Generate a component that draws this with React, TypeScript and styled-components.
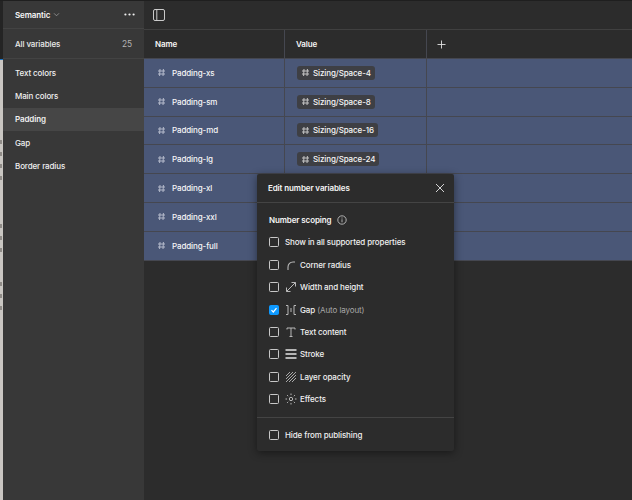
import React from "react";
import styled, { createGlobalStyle } from "styled-components";

const Global = createGlobalStyle`
  html, body { margin: 0; padding: 0; background: #2c2c2c; }
  body { font-family: Inter, "Liberation Sans", sans-serif; -webkit-font-smoothing: antialiased; }
  * { box-sizing: border-box; }
`;

const Page = styled.div`
  position: relative; width: 632px; height: 500px; display: flex; overflow: hidden;
  background: #2c2c2c; color: #f6f6f6; font-size: 8px; letter-spacing: -0.11px; font-weight: 500; border-top: 1px solid #1f1f1f;
`;
const Strip = styled.div`
  width: 3px; flex: none; overflow: hidden; background: #c9c6c2; display: flex; flex-direction: column;
`;
const StripTop = styled.div`height: 59px; flex: none; background: #242424; border-bottom: 1px solid #1e78c8;`;
const StripGroup = styled.div<{ $gap: number }>`
  margin-top: ${p => p.$gap}px; display: flex; flex-direction: column; gap: 8px;
`;
const Tick = styled.span`display: block; width: 2px; height: 4px; background: #8f8b87;`;
const Sidebar = styled.aside`
  width: 141px; flex: none; background: #383838; display: flex; flex-direction: column;
`;
const SideHead = styled.div`
  height: 28px; flex: none; display: flex; align-items: center; padding: 0 9px 0 12px; border-bottom: 1px solid #434343; font-weight: 600;
`;
const SideTitle = styled.span`margin-right: 3px;`;
const MoreBtn = styled.span`margin-left: auto; display: flex;`;
const AllRow = styled.div`
  height: 30px; flex: none; display: flex; align-items: center; justify-content: space-between; padding: 0 12px;
  border-bottom: 1px solid #434343; color: #ececec;
`;
const Count = styled.span`color: #b4b4b4; font-weight: 400; font-size: 8.4px;`;
const Groups = styled.div`padding-top: 2px; display: flex; flex-direction: column;`;
const Group = styled.div<{ $on?: boolean }>`
  height: 23.3px; display: flex; align-items: center; padding-left: 12px; color: #f0f0f0;
  background: ${p => (p.$on ? "#464646" : "transparent")}; font-weight: ${p => (p.$on ? 600 : 500)};
`;
const Main = styled.main`flex: 1; display: flex; flex-direction: column; min-width: 0;`;
const Toolbar = styled.div`height: 29px; flex: none; display: flex; align-items: center; padding-left: 9px; border-bottom: 1px solid #404040;`;
const Row = styled.div<{ $head?: boolean }>`
  height: ${p => (p.$head ? 29 : 28.8)}px; flex: none; display: grid; grid-template-columns: 141px 142px 1fr;
  background: ${p => (p.$head ? "#2c2c2c" : "#4a5777")}; border-bottom: 1px solid #454750;
`;
const Cell = styled.div`
  display: flex; align-items: center; padding-left: 11px; border-right: 1px solid #454750; min-width: 0;
`;
const HeadCell = styled(Cell)`font-weight: 600; color: #f6f6f6;`;
const LastCell = styled.div`display: flex; align-items: center; padding-left: 10px;`;
const NameCell = styled(Cell)`gap: 6px; padding-left: 13px;`;
const ValueCell = styled(Cell)`padding-left: 12px;`;
const Chip = styled.span`
  display: inline-flex; align-items: center; gap: 3px; height: 14px; padding: 0 4px; border-radius: 3px;
  background: #3e3f44; color: #f6f6f6;
`;
const Modal = styled.section`
  position: absolute; left: 257px; top: 173px; width: 197px; height: 277px; background: #2c2c2c;
  border-radius: 2px; box-shadow: 0 2px 8px rgba(0,0,0,.45); display: flex; flex-direction: column;
`;
const ModalHead = styled.div`
  height: 29px; flex: none; display: flex; align-items: center; justify-content: space-between;
  padding: 0 9px 0 11px; border-bottom: 1px solid #444; font-weight: 600;
`;
const Close = styled.span`display: flex;`;
const ModalBody = styled.div`padding: 8.3px 12px 0; display: flex; flex-direction: column; flex: 1;`;
const Scoping = styled.div`height: 17px; display: flex; align-items: center; gap: 6px; font-weight: 600; margin-bottom: 3px;`;
const Option = styled.label`height: 22.4px; flex: none; display: flex; align-items: center; gap: 6px; color: #f0f0f0;`;
const Box = styled.span<{ $on?: boolean }>`
  width: 10px; height: 10px; flex: none; border-radius: 1.5px; display: flex; align-items: center; justify-content: center;
  border: 1.2px solid ${p => (p.$on ? "#0d99ff" : "#c8c8c8")}; background: ${p => (p.$on ? "#0d99ff" : "transparent")};
`;
const IconSlot = styled.span`width: 12px; height: 12px; flex: none; display: flex; margin-right: -3px; color: #b8b8b8;`;
const Muted = styled.span`color: #a8a8a8; font-weight: 400;`;
const Footer = styled.div`
  flex: none; height: 34px; padding: 0 12px; border-top: 1px solid #444;
  display: flex; align-items: center; gap: 6px; color: #f0f0f0;
`;

const HashIcon = ({ c = "#b4bacb" }: { c?: string }) => (
  <svg width="9" height="9" viewBox="0 0 9 9" fill="none" stroke={c} strokeWidth="1">
    <path d="M3 1 2.6 8M6.4 1 6 8M1 3h7M1 6h7" />
  </svg>
);

const icons: Record<string, React.ReactNode> = {
  corner: <path d="M3 11V8a5 5 0 0 1 5-5h2" strokeWidth="1.1" />,
  size: <path d="M1.5 10.5 10.5 1.5M6.5 1.5h4v4M1.5 6.5v4h4" strokeWidth="1" />,
  gap: <path d="M1 1.5h2v9H1M11 1.5H9v9h2M6 4v4" strokeWidth="1" />,
  text: <path d="M2 3.5V2h8v1.5M6 2v8.5M4.5 10.5h3" strokeWidth="1" />,
  stroke: <path d="M.5 2h11M.5 6h11M.5 10h11" stroke="#e4e4e4" strokeWidth="1.4" />,
  opacity: <path d="M1 5 5 1M1 8 8 1M1 11 11 1M4 11l7-7M7 11l4-4" strokeWidth="0.9" />,
  effects: (
    <>
      <circle cx="6" cy="6" r="1.7" strokeWidth="1" />
      <path d="M6 .5v1.6M6 9.9v1.6M.5 6h1.6M9.9 6h1.6M2.1 2.1l1.1 1.1M8.8 8.8l1.1 1.1M2.1 9.9l1.1-1.1M8.8 3.2l1.1-1.1" strokeWidth="1" />
    </>
  ),
};

const OptIcon = ({ name }: { name: string }) => (
  <IconSlot>
    <svg width="12" height="12" viewBox="0 0 12 12" fill="none" stroke="currentColor">{icons[name]}</svg>
  </IconSlot>
);

const Check = () => (
  <svg width="8" height="8" viewBox="0 0 8 8" fill="none" stroke="#fff" strokeWidth="1.2"><path d="M1.5 4.2 3.3 6 6.5 2.2" /></svg>
);

const rows = [
  ["Padding-xs", "Sizing/Space-4"],
  ["Padding-sm", "Sizing/Space-8"],
  ["Padding-md", "Sizing/Space-16"],
  ["Padding-lg", "Sizing/Space-24"],
  ["Padding-xl", ""],
  ["Padding-xxl", ""],
  ["Padding-full", ""],
];

const options = [
  { name: "corner", label: "Corner radius" },
  { name: "size", label: "Width and height" },
  { name: "gap", label: "Gap", note: "(Auto layout)", on: true },
  { name: "text", label: "Text content" },
  { name: "stroke", label: "Stroke" },
  { name: "opacity", label: "Layer opacity" },
  { name: "effects", label: "Effects" },
];

export default function App() {
  return (
    <Page>
      <Global />
      <Strip>
        <StripTop />
        <StripGroup $gap={80}>
          <Tick /><Tick /><Tick /><Tick />
        </StripGroup>
        <StripGroup $gap={44}>
          <Tick /><Tick /><Tick />
        </StripGroup>
        <StripGroup $gap={30}>
          <Tick /><Tick /><Tick />
        </StripGroup>
      </Strip>
      <Sidebar>
        <SideHead>
          <SideTitle>Semantic</SideTitle>
          <svg width="7" height="7" viewBox="0 0 7 7" fill="none" stroke="#9a9a9a" strokeWidth="0.8"><path d="M1 2.3 3.5 4.8 6 2.3" /></svg>
          <MoreBtn>
            <svg width="11" height="3" viewBox="0 0 11 3" fill="#f0f0f0"><circle cx="1.4" cy="1.5" r="1.1" /><circle cx="5.5" cy="1.5" r="1.1" /><circle cx="9.6" cy="1.5" r="1.1" /></svg>
          </MoreBtn>
        </SideHead>
        <AllRow>All variables<Count>25</Count></AllRow>
        <Groups>
          <Group>Text colors</Group>
          <Group>Main colors</Group>
          <Group $on>Padding</Group>
          <Group>Gap</Group>
          <Group>Border radius</Group>
        </Groups>
      </Sidebar>
      <Main>
        <Toolbar>
          <svg width="12" height="12" viewBox="0 0 12 12" fill="none" stroke="#dcdcdc" strokeWidth="0.9">
            <rect x="0.5" y="0.5" width="11" height="11" rx="1.5" /><path d="M3.8 .5v11" />
          </svg>
        </Toolbar>
        <Row $head>
          <HeadCell>Name</HeadCell>
          <HeadCell>Value</HeadCell>
          <LastCell>
            <svg width="9" height="9" viewBox="0 0 9 9" fill="none" stroke="#e0e0e0" strokeWidth="0.9"><path d="M4.5 .5v8M.5 4.5h8" /></svg>
          </LastCell>
        </Row>
        {rows.map(([name, value]) => (
          <Row key={name}>
            <NameCell><HashIcon />{name}</NameCell>
            <ValueCell>{value && <Chip><HashIcon c="#c4c4c4" />{value}</Chip>}</ValueCell>
            <LastCell />
          </Row>
        ))}
      </Main>
      <Modal>
        <ModalHead>
          Edit number variables
          <Close>
            <svg width="10" height="10" viewBox="0 0 10 10" fill="none" stroke="#e6e6e6" strokeWidth="0.9"><path d="M1 1 9 9M9 1 1 9" /></svg>
          </Close>
        </ModalHead>
        <ModalBody>
          <Scoping>
            Number scoping
            <svg width="10" height="10" viewBox="0 0 10 10" fill="none" stroke="#d0d0d0" strokeWidth="0.8">
              <circle cx="5" cy="5" r="4.2" /><path d="M5 4.3v3M5 2.5v1" />
            </svg>
          </Scoping>
          <Option><Box />Show in all supported properties</Option>
          {options.map(o => (
            <Option key={o.name}>
              <Box $on={o.on}>{o.on && <Check />}</Box>
              <OptIcon name={o.name} />
              <span>{o.label}{o.note && <Muted> {o.note}</Muted>}</span>
            </Option>
          ))}
        </ModalBody>
        <Footer><Box />Hide from publishing</Footer>
      </Modal>
    </Page>
  );
}
